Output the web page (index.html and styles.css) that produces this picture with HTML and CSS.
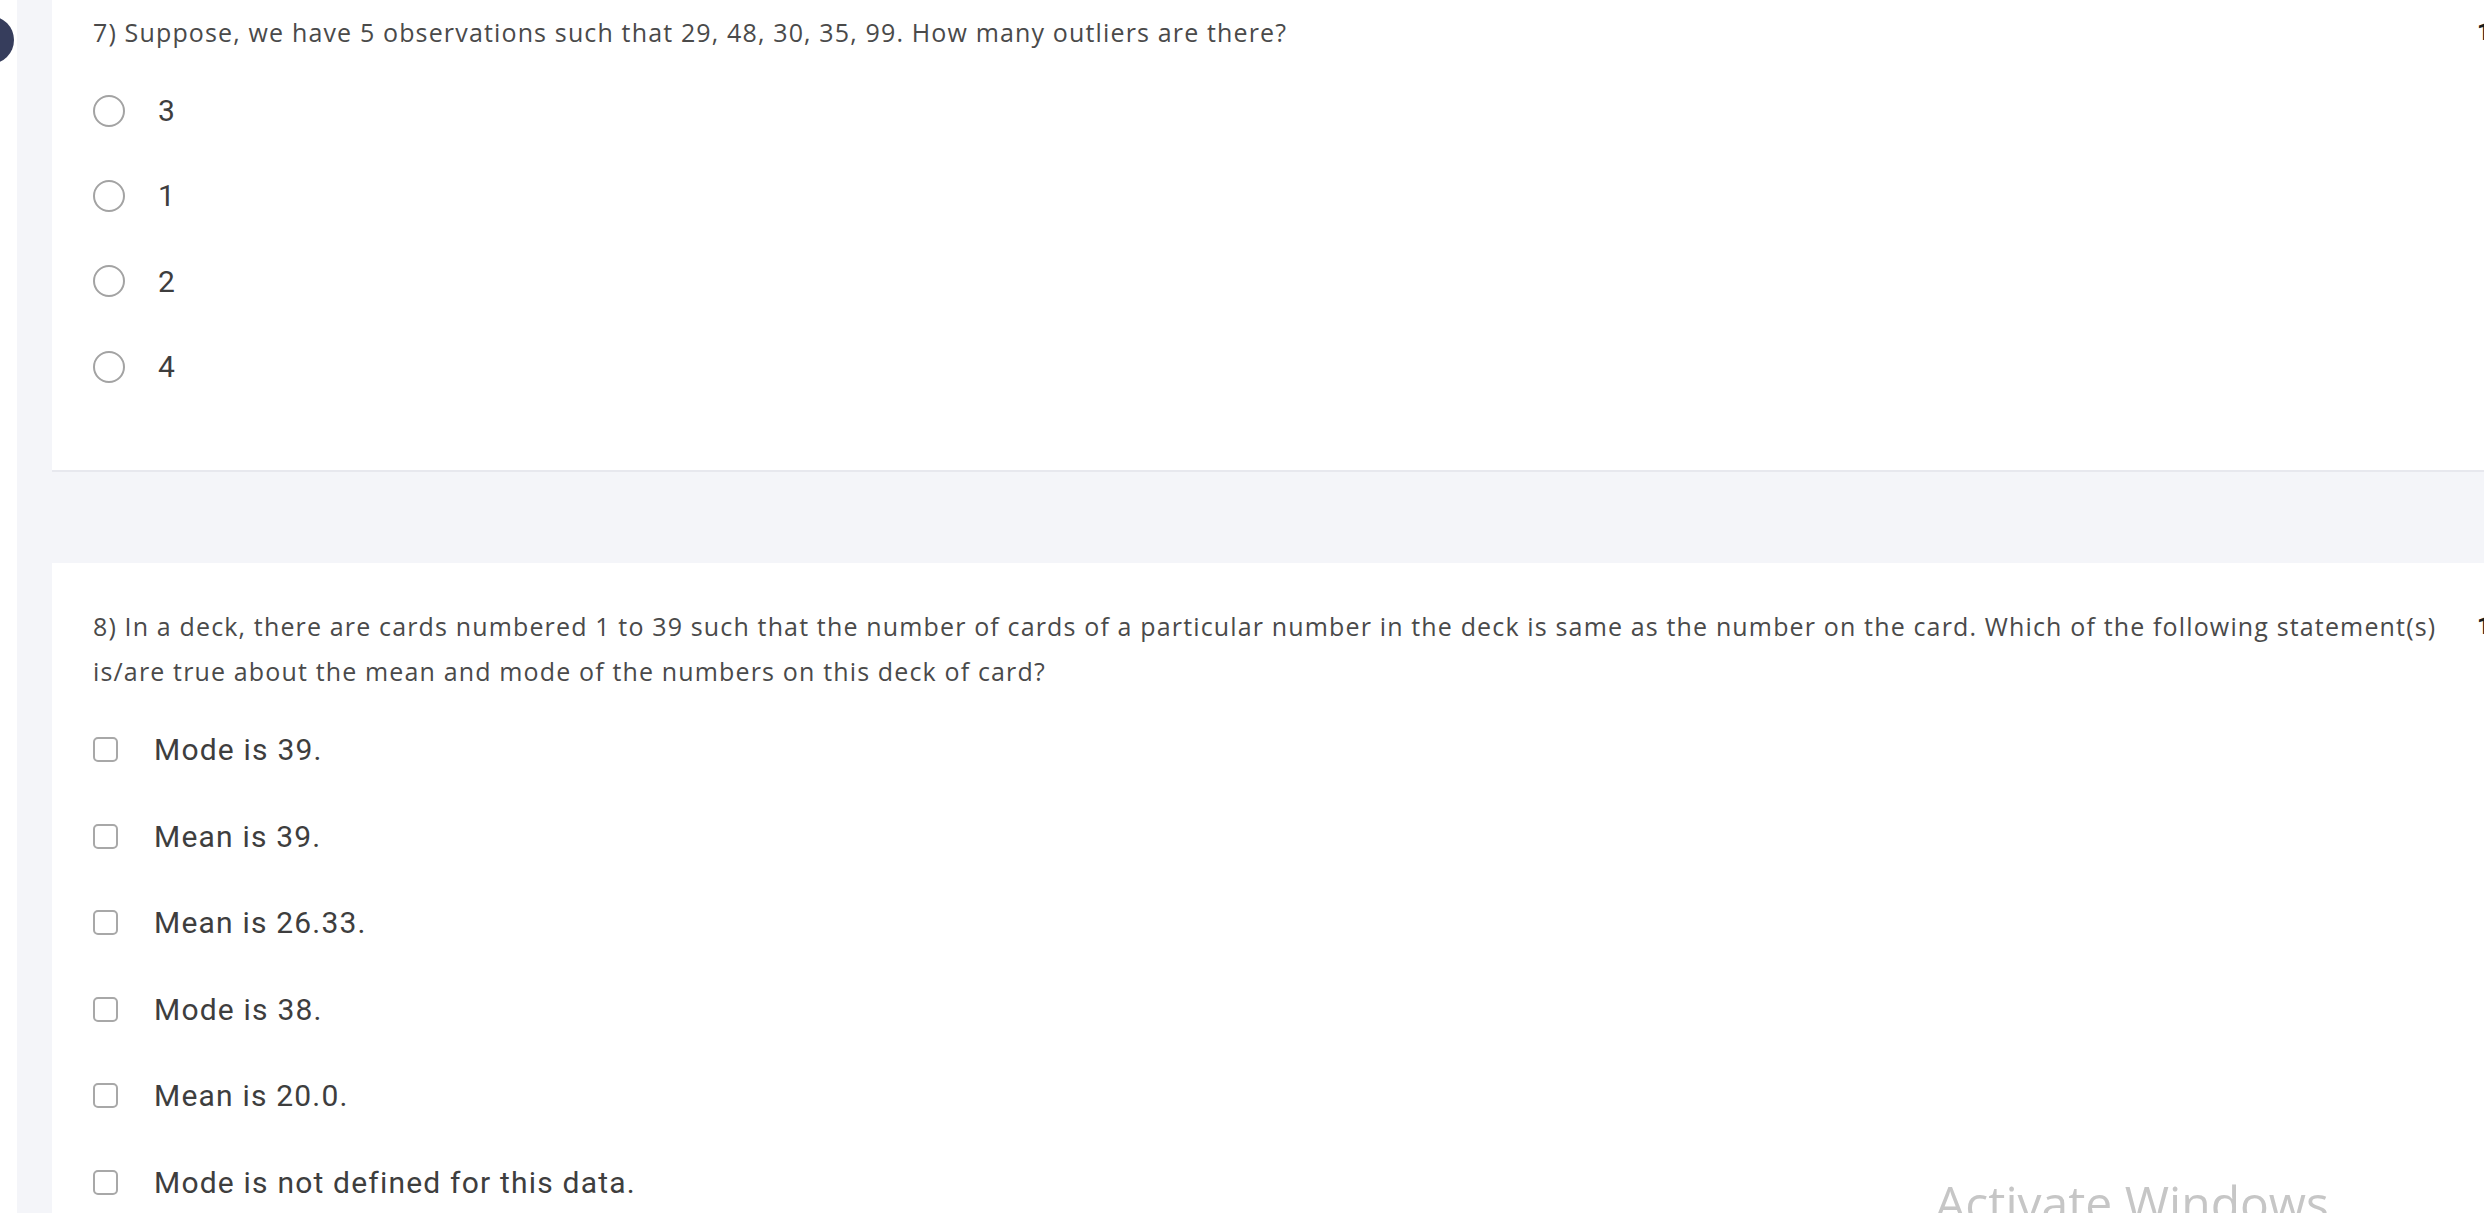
FILE: index.html
```html
<!DOCTYPE html>
<html lang="en">
<head>
    <meta charset="UTF-8">
    <meta name="viewport" content="width=device-width, initial-scale=1.0">
    <title>Assessment</title>
    <link rel="stylesheet" href="styles.css">
</head>
<body>
    <div class="page">
        <!-- Left rail with the question navigator button -->
        <aside class="rail">
            <span class="nav-dot"></span>
        </aside>

        <main class="sheet">
            <!-- Question 7 -->
            <section class="question-card first">
                <div class="question-head">
                    <p class="question-text">7) Suppose, we have 5 observations such that 29, 48, 30, 35, 99. How many outliers are there?</p>
                    <span class="marks">1 Point</span>
                </div>
                <ul class="options">
                    <li class="option"><span class="radio"></span><span class="option-label">3</span></li>
                    <li class="option"><span class="radio"></span><span class="option-label">1</span></li>
                    <li class="option"><span class="radio"></span><span class="option-label">2</span></li>
                    <li class="option"><span class="radio"></span><span class="option-label">4</span></li>
                </ul>
            </section>

            <!-- Question 8 -->
            <section class="question-card">
                <div class="question-head">
                    <p class="question-text">8) In a deck, there are cards numbered 1 to 39 such that the number of cards of a particular number in the deck is same as the number on the card. Which of the following statement(s) is/are true about the mean and mode of the numbers on this deck of card?</p>
                    <span class="marks">1 Point</span>
                </div>
                <ul class="options multi">
                    <li class="option"><span class="checkbox"></span><span class="option-label">Mode is 39.</span></li>
                    <li class="option"><span class="checkbox"></span><span class="option-label">Mean is 39.</span></li>
                    <li class="option"><span class="checkbox"></span><span class="option-label">Mean is 26.33.</span></li>
                    <li class="option"><span class="checkbox"></span><span class="option-label">Mode is 38.</span></li>
                    <li class="option"><span class="checkbox"></span><span class="option-label">Mean is 20.0.</span></li>
                    <li class="option"><span class="checkbox"></span><span class="option-label">Mode is not defined for this data.</span></li>
                </ul>
            </section>
        </main>
    </div>

    <div class="watermark">Activate Windows</div>
</body>
</html>
```

FILE: styles.css
```css
body {
    margin: 0;
    overflow: hidden;
    background-color: #f4f5f9;
    font-family: Roboto, "Liberation Sans", sans-serif;
    color: #444;
}
.page {
    display: flex;
    height: 100vh;
}
.rail {
    position: relative;
    flex: 0 0 17px;
    background-color: #fff;
}
.nav-dot {
    position: absolute;
    left: -34px;
    top: 16px;
    width: 48px;
    height: 48px;
    border-radius: 50%;
    background-color: #363d5c;
}
.sheet {
    flex: 1;
    min-width: 0;
    padding-left: 35px;
}
.question-card {
    background-color: #fff;
    padding: 41px 0 40px 41px;
}
.question-card.first {
    padding-top: 10px;
    padding-bottom: 61px;
    border-bottom: 2px solid #e7e8ee;
    margin-bottom: 91px;
}
.question-head {
    display: flex;
    gap: 38px;
    margin-right: -100px;
}
.question-text {
    flex: 1;
    margin: 0;
    font-family: "Open Sans", sans-serif;
    font-size: 25px;
    line-height: 45px;
    letter-spacing: 1.15px;
    color: #4a4a4a;
}
.marks {
    flex: 0 0 107px;
    font-size: 24px;
    line-height: 45px;
    font-weight: 700;
    color: #1c1c1c;
    white-space: nowrap;
}
.options {
    list-style: none;
    margin: 13px 0 0;
    padding: 0;
}
.options.multi {
    margin-top: 12px;
}
.option {
    display: flex;
    align-items: center;
    height: 85.3px;
}
.multi .option {
    height: 86.6px;
}
.radio {
    flex: 0 0 auto;
    width: 28px;
    height: 28px;
    border: 2px solid #a3a3a3;
    border-radius: 50%;
    margin-right: 33px;
}
.checkbox {
    flex: 0 0 auto;
    width: 21px;
    height: 21px;
    border: 2px solid #a8a8a8;
    border-radius: 5px;
    margin-right: 36px;
}
.option-label {
    font-size: 30px;
    letter-spacing: 1.2px;
    color: #3e3e3e;
}
.watermark {
    position: fixed;
    left: 1935px;
    top: 1179px;
    font-family: "Open Sans", sans-serif;
    font-size: 48px;
    line-height: 1;
    color: #c6c6c6;
    white-space: nowrap;
}
```
